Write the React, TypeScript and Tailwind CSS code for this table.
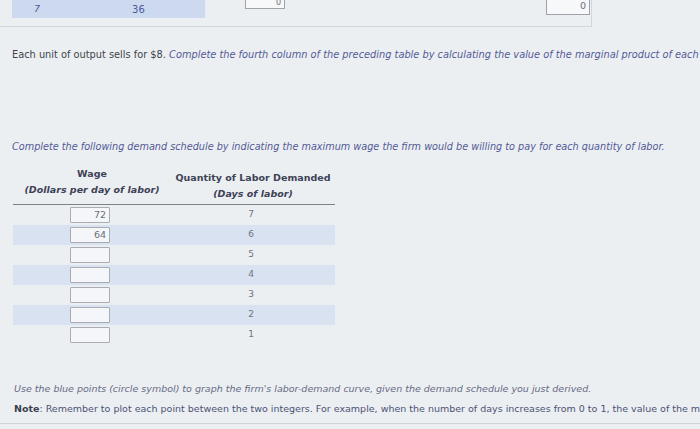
import React from "react";

const rows = [
  { wage: "72", qty: "7" },
  { wage: "64", qty: "6" },
  { wage: "", qty: "5" },
  { wage: "", qty: "4" },
  { wage: "", qty: "3" },
  { wage: "", qty: "2" },
  { wage: "", qty: "1" },
];

const WageBox = ({ value }: { value: string }) => (
  <div className="w-[40px] h-[16px] border border-[#a9adb3] bg-[#f4f6fa] rounded-[1px] text-right pr-[3px] text-[9.5px] leading-[14px] text-[#6b6f78]">
    {value}
  </div>
);

export default function App() {
  return (
    <div className="w-[700px] h-[429px] overflow-hidden bg-[#eceff2] text-[#3f434b] font-['DejaVu_Sans',Verdana,sans-serif] text-[9.5px]">
      {/* tail of the previous table */}
      <div className="w-[592px] h-[27px] border-b border-r border-[#d3d7dc] flex items-start">
        <div className="ml-[12px] w-[193px] h-[18px] bg-[#cdd9ee] flex items-center text-[#4a5aa0]">
          <span className="ml-[22px] italic">7</span>
          <span className="ml-[92px] text-[10px]">36</span>
        </div>
        <div className="ml-[40px] w-[40px] h-[9px] border-x border-b border-[#9ea3aa] bg-[#f7f8fa] text-right pr-[3px] text-[8px] leading-[6px] text-[#6b6f78] overflow-hidden">
          0
        </div>
        <div className="ml-[261px] w-[44px] h-[15px] border-x border-b border-[#9ea3aa] bg-[#f7f8fa] text-right pr-[3px] text-[9.5px] leading-[12px] text-[#6b6f78]">
          0
        </div>
      </div>

      <p className="mt-[21px] ml-[12px] whitespace-nowrap text-[9.8px]">
        Each unit of output sells for $8.{" "}
        <span className="italic text-[#535a96]">
          Complete the fourth column of the preceding table by calculating the value of the marginal product of each unit of labor.
        </span>
      </p>

      <p className="mt-[77px] ml-[12px] whitespace-nowrap italic text-[9.7px] text-[#535a96]">
        Complete the following demand schedule by indicating the maximum wage the firm would be willing to pay for each quantity of labor.
      </p>

      {/* demand schedule */}
      <div className="ml-[13px] mt-[12px] w-[322px]">
        <div className="flex font-bold text-[#3d4256] border-b border-[#7c818a] pb-[2px]">
          <div className="w-[158px] text-center">
            <div className="leading-[16px]">Wage</div>
            <div className="italic leading-[16px]">(Dollars per day of labor)</div>
          </div>
          <div className="flex-1 text-center pt-[4px]">
            <div className="leading-[16px]">Quantity of Labor Demanded</div>
            <div className="italic leading-[16px]">(Days of labor)</div>
          </div>
        </div>
        {rows.map((r, i) => (
          <div
            key={r.qty}
            className={`flex items-center h-[20px] ${i % 2 === 1 ? "bg-[#d8e2f1]" : ""}`}
          >
            <div className="w-[158px] flex pl-[57px]">
              <WageBox value={r.wage} />
            </div>
            <div className="w-[160px] text-center text-[#6f7480] text-[9px]">{r.qty}</div>
          </div>
        ))}
      </div>

      <p className="mt-[37px] ml-[14px] whitespace-nowrap italic text-[#666b84]">
        Use the blue points (circle symbol) to graph the firm's labor-demand curve, given the demand schedule you just derived.
      </p>
      <p className="mt-[6px] ml-[14px] whitespace-nowrap text-[#4b5276]">
        <span className="font-bold text-[#3a3f4e]">Note</span>: Remember to plot each point between the two integers. For example, when the number of days increases from 0 to 1, the value of the marginal product
      </p>
      <div className="mt-[6px] border-t border-[#d0d4d9]" />
    </div>
  );
}
